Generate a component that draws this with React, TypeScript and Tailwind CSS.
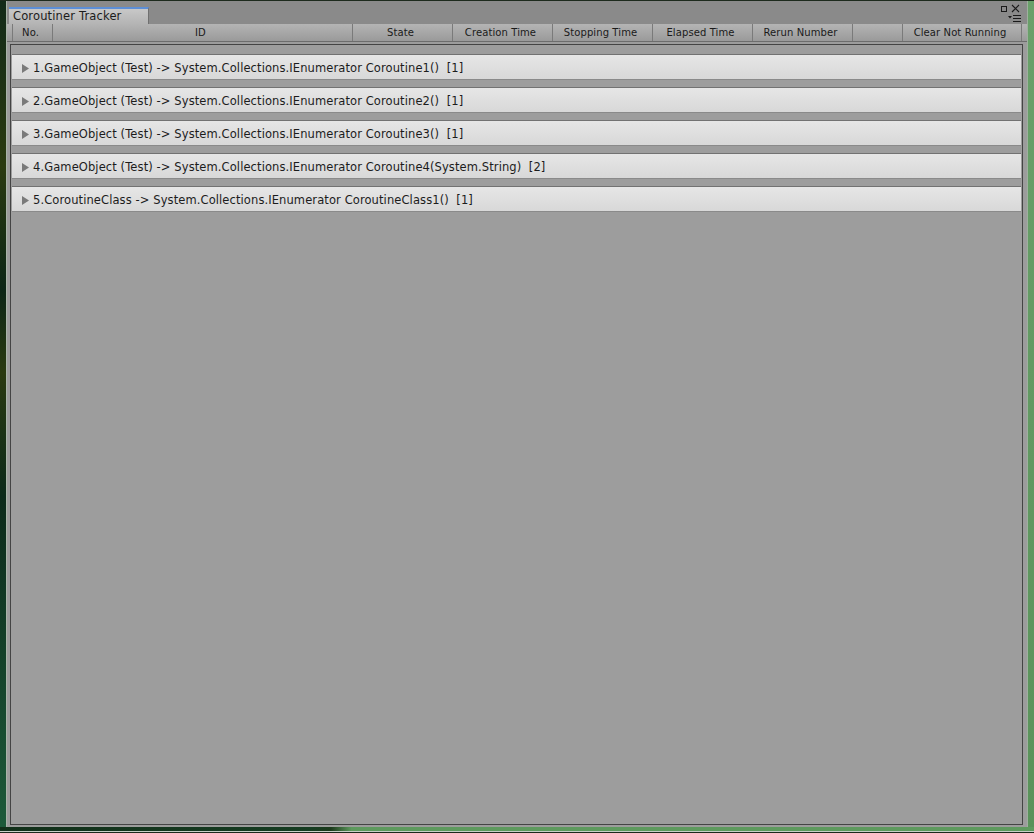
import React from "react";

const columns = [
  { label: "No.", w: "w-[40px]" },
  { label: "ID", w: "w-[300px]" },
  { label: "State", w: "w-[100px]" },
  { label: "Creation Time", w: "w-[100px]" },
  { label: "Stopping Time", w: "w-[100px]" },
  { label: "Elapsed Time", w: "w-[100px]" },
  { label: "Rerun Number", w: "w-[100px]" },
  { label: "", w: "w-[50px]" },
  { label: "Clear Not Running", w: "flex-1" },
];

const rows = [
  "1.GameObject (Test) -> System.Collections.IEnumerator Coroutine1()  [1]",
  "2.GameObject (Test) -> System.Collections.IEnumerator Coroutine2()  [1]",
  "3.GameObject (Test) -> System.Collections.IEnumerator Coroutine3()  [1]",
  "4.GameObject (Test) -> System.Collections.IEnumerator Coroutine4(System.String)  [2]",
  "5.CoroutineClass -> System.Collections.IEnumerator CoroutineClass1()  [1]",
];

const font = { fontFamily: "'DejaVu Sans', Verdana, sans-serif" };

export default function App() {
  return (
    <div
      className="w-[1034px] h-[833px] overflow-hidden flex flex-col bg-[linear-gradient(90deg,#0d2616_0%,#143a20_40%,#2f6a3c_70%,#5e9a5e_100%)]"
      style={font}
    >
      <div className="h-[1px] bg-[#1d2a1d]" />
      <div className="flex flex-1">
        <div className="w-[6px] bg-[linear-gradient(180deg,#122a18_0%,#2a3a10_20%,#0c2616_35%,#2a3a10_45%,#0c2a1a_60%,#1d5a3a_100%)]" />
        <div className="w-[1px] bg-[#a8b4a8]" />
        {/* window */}
        <div className="w-[1020px] flex flex-col bg-[#8a8a8a]">
          {/* title bar */}
          <div className="h-[23px] flex items-end relative">
            <div className="ml-[2px] w-[140px] h-[17px] border-t-2 border-[#5d8fd6] bg-[linear-gradient(180deg,#c8c8c8,#b4b4b4)] border-r border-r-[#707070] text-[11.5px] tracking-[0.15px] text-[#1c1c1c] pl-[4px] leading-[15px]">
              Coroutiner Tracker
            </div>
            <div className="absolute right-[7px] top-[3px] flex items-start gap-[4px]">
              <div className="w-[6px] h-[6px] border-[1.5px] border-[#1a1a1a] mt-[2px]" />
              <svg width="9" height="9" viewBox="0 0 9 9">
                <path d="M1 1 L8 8 M8 1 L1 8" stroke="#1a1a1a" strokeWidth="1.1" />
              </svg>
            </div>
            <svg className="absolute right-[6px] top-[14px]" width="13" height="7" viewBox="0 0 13 7">
              <path d="M0 1 L4 1 L2 3.5 Z" fill="#1a1a1a" />
              <path d="M5 0.5 H13 M5 3.5 H13 M5 6.5 H13" stroke="#1a1a1a" strokeWidth="1" />
            </svg>
          </div>
          {/* toolbar header */}
          <div className="h-[18px] flex bg-[linear-gradient(180deg,#b4b4b4,#9a9a9a)] border-b border-[#6c6c6c] pl-[5px] pr-[5px]">
            {columns.map((c, i) => (
              <div
                key={i}
                className={`${c.w} border-l border-[#7a7a7a] text-[10px] tracking-[0.1px] text-[#1a1a1a] flex items-center justify-center leading-none pt-[1px] pr-[4px] ${i === columns.length - 1 ? "border-r" : ""}`}
              >
                {c.label}
              </div>
            ))}
          </div>
          {/* content */}
          <div className="flex-1 bg-[#9c9c9c] pt-[2px] pl-[3px] pr-[4px] pb-[2px] flex flex-col">
            <div className="flex-1 border border-[#444444] flex flex-col pt-[9px] pl-[1px] pr-[1px] gap-[7px] bg-[#9d9d9d]">
              {rows.map((r, i) => (
                <div
                  key={i}
                  className="h-[26px] flex items-center pt-[3px] border-t border-[#727272] border-b border-b-[#8a8a8a] bg-[linear-gradient(180deg,#e6e6e6,#d8d8d8)] pl-[10px]"
                >
                  <svg width="8" height="9" viewBox="0 0 8 9" className="mr-[3px]">
                    <path d="M0 0 L7 4.5 L0 9 Z" fill="#7a7a7a" />
                  </svg>
                  <span className="text-[11.5px] tracking-[0.1px] text-[#1c1c1c] whitespace-pre leading-none">{r}</span>
                </div>
              ))}
            </div>
          </div>
        </div>
        <div className="w-[1px] bg-[#9fb09f]" />
        <div className="flex-1 bg-[linear-gradient(180deg,#6aa06a,#5a925a)]" />
      </div>
      <div className="h-[4px] bg-[linear-gradient(90deg,#12301a_0%,#163d22_30%,#1c3a1c_32%,#5e9a5e_34%,#5e9a5e_100%)]" />
      <div className="h-[1px] bg-[#c8d0c8]" />
      <div className="h-[1px] bg-[#1d2a1d]" />
    </div>
  );
}
